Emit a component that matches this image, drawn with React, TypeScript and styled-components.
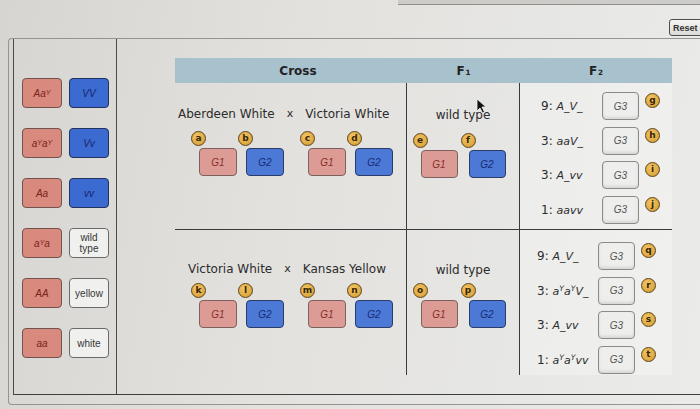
import React from "react";
import styled, { createGlobalStyle, css } from "styled-components";

const GlobalStyle = createGlobalStyle`
  html, body { margin: 0; padding: 0; }
  body {
    width: 700px;
    height: 409px;
    overflow: hidden;
    background: linear-gradient(100deg, #d6d5d1 0%, #e2e1de 40%, #ebebe9 100%);
    font-family: "DejaVu Sans", Verdana, sans-serif;
    color: #2a2a2a;
  }
`;

const Page = styled.div`
  position: relative;
  width: 700px;
  height: 409px;
  overflow: hidden;
`;

const TopStrip = styled.div`
  margin-left: 398px;
  height: 4px;
  background: #cdccc9;
  border-bottom: 1px solid #8e8e8c;
`;

const ResetRow = styled.div`
  display: flex;
  justify-content: flex-end;
  padding-top: 14px;
  height: 17px;
`;

const ResetButton = styled.button`
  width: 41px;
  height: 17px;
  margin-right: -10px;
  padding: 0 0 0 3px;
  text-align: left;
  border: 1px solid #4e4e4e;
  border-radius: 3px;
  background: linear-gradient(#f6f6f4, #dadad8);
  font-family: "Liberation Sans", Arial, sans-serif;
  font-size: 9px;
  font-weight: bold;
  color: #333;
`;

const Frame = styled.div`
  margin: 2px 0 0 8px;
  width: 700px;
  height: 367px;
  box-sizing: border-box;
  border: 1px solid #949492;
  border-right: none;
  border-radius: 4px 0 0 4px;
  padding-left: 4px;
`;

const Inner = styled.div`
  display: grid;
  grid-template-columns: 103px 1fr;
  height: 356px;
  box-sizing: border-box;
  border-left: 1px solid #4a4a4a;
  border-bottom: 1.5px solid #3e3e3e;
`;

const LeftPanel = styled.div`
  display: flex;
  flex-direction: column;
  gap: 20px;
  padding: 39px 0 0 8px;
  border-right: 1px solid #4a4a4a;
`;

const TileRow = styled.div`
  display: flex;
  gap: 7px;
`;

type Variant = "pink" | "blue" | "white";

const tileColors = {
  pink: css`
    background: #d88a7e;
    border-color: #73534d;
    color: #7a2319;
    font-style: italic;
  `,
  blue: css`
    background: #3b6ad0;
    border-color: #22315d;
    color: #14246c;
    font-style: italic;
  `,
  white: css`
    background: #f0f0ee;
    border-color: #6a6a6a;
    color: #363636;
  `,
};

const Tile = styled.div<{ $v: Variant }>`
  width: 40px;
  height: 30px;
  box-sizing: border-box;
  border: 1.5px solid;
  border-radius: 4px;
  display: flex;
  align-items: center;
  justify-content: center;
  text-align: center;
  font-family: "Liberation Sans", Arial, sans-serif;
  font-size: 10px;
  line-height: 11px;
  ${(p) => tileColors[p.$v]}
`;

const Sup = styled.sup`
  font-size: 0.7em;
  vertical-align: 0.55em;
  line-height: 0;
`;

const Main = styled.div`
  padding: 19px 0 0 58px;
`;

const Table = styled.div`
  display: grid;
  grid-template-columns: 232px 113px 152px;
  grid-template-rows: 25px 147px 145px;
`;

const HeadCell = styled.div<{ $shift?: number }>`
  background: #a7c1cd;
  display: flex;
  align-items: center;
  justify-content: center;
  padding-left: ${(p) => p.$shift ?? 0}px;
  font-size: 12px;
  font-weight: bold;
  color: #222;
`;

const Sub = styled.span`
  font-size: 0.6em;
  position: relative;
  top: 0.3em;
  margin-left: 1px;
`;

const Cell = styled.div<{ $right?: boolean; $bottom?: boolean; $light?: boolean; $pad: number }>`
  box-sizing: border-box;
  padding-top: ${(p) => p.$pad}px;
  border-right: ${(p) => (p.$right ? "1.5px solid #3a3a3a" : "none")};
  border-bottom: ${(p) => (p.$bottom ? "1.5px solid #3a3a3a" : "none")};
  background: ${(p) => (p.$light ? "rgba(255,255,255,0.28)" : "transparent")};
  display: flex;
  flex-direction: column;
`;

const Names = styled.div<{ $indent: number }>`
  display: flex;
  align-items: center;
  gap: 12px;
  padding-left: ${(p) => p.$indent}px;
  font-size: 12px;
  line-height: 14px;
  color: #2c2c2c;
`;

const Times = styled.span`
  font-size: 11px;
`;

const Phenotype = styled.div`
  text-align: center;
  font-size: 12px;
  line-height: 14px;
  color: #2c2c2c;
`;

const GameteRow = styled.div<{ $gap: number; $indent?: number; $center?: boolean }>`
  display: flex;
  gap: 24px;
  margin-top: ${(p) => p.$gap}px;
  padding-left: ${(p) => p.$indent ?? 0}px;
  justify-content: ${(p) => (p.$center ? "center" : "flex-start")};
`;

const ParentGroup = styled.div<{ $gap: number }>`
  display: flex;
  gap: ${(p) => p.$gap}px;
`;

const GameteSlot = styled.div`
  position: relative;
  padding-top: 16px;
`;

const Badge = styled.div`
  width: 15px;
  height: 15px;
  box-sizing: border-box;
  border-radius: 50%;
  border: 1.5px solid #5c4218;
  background: radial-gradient(circle at 40% 35%, #f2c565, #d39a2d);
  display: flex;
  align-items: center;
  justify-content: center;
  font-family: "DejaVu Sans", Verdana, sans-serif;
  font-size: 9px;
  font-weight: bold;
  line-height: 1;
  color: #36250a;
`;

const CornerBadge = styled(Badge)`
  position: absolute;
  top: -1px;
  left: -8px;
`;

type GKind = "g1" | "g2" | "g3";

const gColors = {
  g1: css`
    background: #dc9c95;
    border: 1.5px solid #7c625f;
    color: #8b2e29;
  `,
  g2: css`
    background: #4b79d5;
    border: 1.5px solid #2a3c69;
    color: #1a2b77;
  `,
  g3: css`
    background: #eeeeec;
    border: 1.5px solid #8b8b89;
    color: #555;
    box-shadow: inset 0 -2px 3px rgba(0, 0, 0, 0.1);
  `,
};

const GBox = styled.div<{ $k: GKind; $w: number }>`
  width: ${(p) => p.$w}px;
  height: 28px;
  box-sizing: border-box;
  border-radius: 4px;
  display: flex;
  align-items: center;
  justify-content: center;
  font-family: "Liberation Sans", Arial, sans-serif;
  font-style: italic;
  font-size: 10px;
  ${(p) => gColors[p.$k]}
`;

const F2List = styled.div`
  display: flex;
  flex-direction: column;
  gap: 6.5px;
`;

const F2Row = styled.div<{ $indent: number }>`
  display: flex;
  align-items: center;
  padding-left: ${(p) => p.$indent}px;
`;

const Ratio = styled.span`
  width: 61px;
  font-size: 12px;
  color: #2c2c2c;
  white-space: nowrap;
`;

const Geno = styled.i`
  font-size: 11px;
`;

const SideBadge = styled(Badge)`
  align-self: flex-start;
  margin: 1px 0 0 6px;
`;

const Cursor = styled.svg`
  position: absolute;
  left: 476px;
  top: 98px;
`;

const Gamete = ({ letter, kind, w = 38 }: { letter: string; kind: GKind; w?: number }) => (
  <GameteSlot>
    <CornerBadge>{letter}</CornerBadge>
    <GBox $k={kind} $w={w}>
      {kind === "g1" ? "G1" : "G2"}
    </GBox>
  </GameteSlot>
);

const leftTiles: [React.ReactNode, React.ReactNode, Variant][] = [
  [<>Aa<Sup>Y</Sup></>, "VV", "blue"],
  [<>a<Sup>Y</Sup>a<Sup>Y</Sup></>, "Vv", "blue"],
  ["Aa", "vv", "blue"],
  [<>a<Sup>Y</Sup>a</>, <>wild<br />type</>, "white"],
  ["AA", "yellow", "white"],
  ["aa", "white", "white"],
];

type F2Item = { n: string; g: React.ReactNode; b: string };

const f2a: F2Item[] = [
  { n: "9:", g: "A_V_", b: "g" },
  { n: "3:", g: "aaV_", b: "h" },
  { n: "3:", g: "A_vv", b: "i" },
  { n: "1:", g: "aavv", b: "j" },
];

const f2b: F2Item[] = [
  { n: "9:", g: "A_V_", b: "q" },
  { n: "3:", g: <>a<Sup>Y</Sup>a<Sup>Y</Sup>V_</>, b: "r" },
  { n: "3:", g: "A_vv", b: "s" },
  { n: "1:", g: <>a<Sup>Y</Sup>a<Sup>Y</Sup>vv</>, b: "t" },
];

const F2Block = ({ items, indent }: { items: F2Item[]; indent: number }) => (
  <F2List>
    {items.map((it) => (
      <F2Row key={it.b} $indent={indent}>
        <Ratio>
          {it.n} <Geno>{it.g}</Geno>
        </Ratio>
        <GBox $k="g3" $w={37}>G3</GBox>
        <SideBadge>{it.b}</SideBadge>
      </F2Row>
    ))}
  </F2List>
);

export default function App() {
  return (
    <Page>
      <GlobalStyle />
      <TopStrip />
      <ResetRow>
        <ResetButton>Reset</ResetButton>
      </ResetRow>
      <Frame>
        <Inner>
          <LeftPanel>
            {leftTiles.map(([a, b, v], i) => (
              <TileRow key={i}>
                <Tile $v="pink">{a}</Tile>
                <Tile $v={v}>{b}</Tile>
              </TileRow>
            ))}
          </LeftPanel>
          <Main>
            <Table>
              <HeadCell $shift={14}>Cross</HeadCell>
              <HeadCell>
                F<Sub>1</Sub>
              </HeadCell>
              <HeadCell>
                F<Sub>2</Sub>
              </HeadCell>

              <Cell $right $bottom $pad={24}>
                <Names $indent={3}>
                  <span>Aberdeen White</span>
                  <Times>x</Times>
                  <span>Victoria White</span>
                </Names>
                <GameteRow $gap={11} $indent={24}>
                  <ParentGroup $gap={9}>
                    <Gamete letter="a" kind="g1" />
                    <Gamete letter="b" kind="g2" />
                  </ParentGroup>
                  <ParentGroup $gap={9}>
                    <Gamete letter="c" kind="g1" />
                    <Gamete letter="d" kind="g2" />
                  </ParentGroup>
                </GameteRow>
              </Cell>
              <Cell $right $bottom $pad={25}>
                <Phenotype>wild type</Phenotype>
                <GameteRow $gap={12} $center>
                  <ParentGroup $gap={11}>
                    <Gamete letter="e" kind="g1" w={37} />
                    <Gamete letter="f" kind="g2" w={37} />
                  </ParentGroup>
                </GameteRow>
              </Cell>
              <Cell $bottom $light $pad={9}>
                <F2Block items={f2a} indent={21} />
              </Cell>

              <Cell $right $pad={32}>
                <Names $indent={13}>
                  <span>Victoria White</span>
                  <Times>x</Times>
                  <span>Kansas Yellow</span>
                </Names>
                <GameteRow $gap={8} $indent={24}>
                  <ParentGroup $gap={9}>
                    <Gamete letter="k" kind="g1" />
                    <Gamete letter="l" kind="g2" />
                  </ParentGroup>
                  <ParentGroup $gap={9}>
                    <Gamete letter="m" kind="g1" />
                    <Gamete letter="n" kind="g2" />
                  </ParentGroup>
                </GameteRow>
              </Cell>
              <Cell $right $pad={33}>
                <Phenotype>wild type</Phenotype>
                <GameteRow $gap={7} $center>
                  <ParentGroup $gap={11}>
                    <Gamete letter="o" kind="g1" w={37} />
                    <Gamete letter="p" kind="g2" w={37} />
                  </ParentGroup>
                </GameteRow>
              </Cell>
              <Cell $light $pad={12}>
                <F2Block items={f2b} indent={17} />
              </Cell>
            </Table>
          </Main>
        </Inner>
      </Frame>
      <Cursor width="11" height="16" viewBox="0 0 11 16">
        <path d="M1 1 L1 13 L4 10 L6.5 15 L8.5 14 L6 9 L10 9 Z" fill="#111" stroke="#f4f4f4" strokeWidth="0.8" strokeLinejoin="round" />
      </Cursor>
    </Page>
  );
}
